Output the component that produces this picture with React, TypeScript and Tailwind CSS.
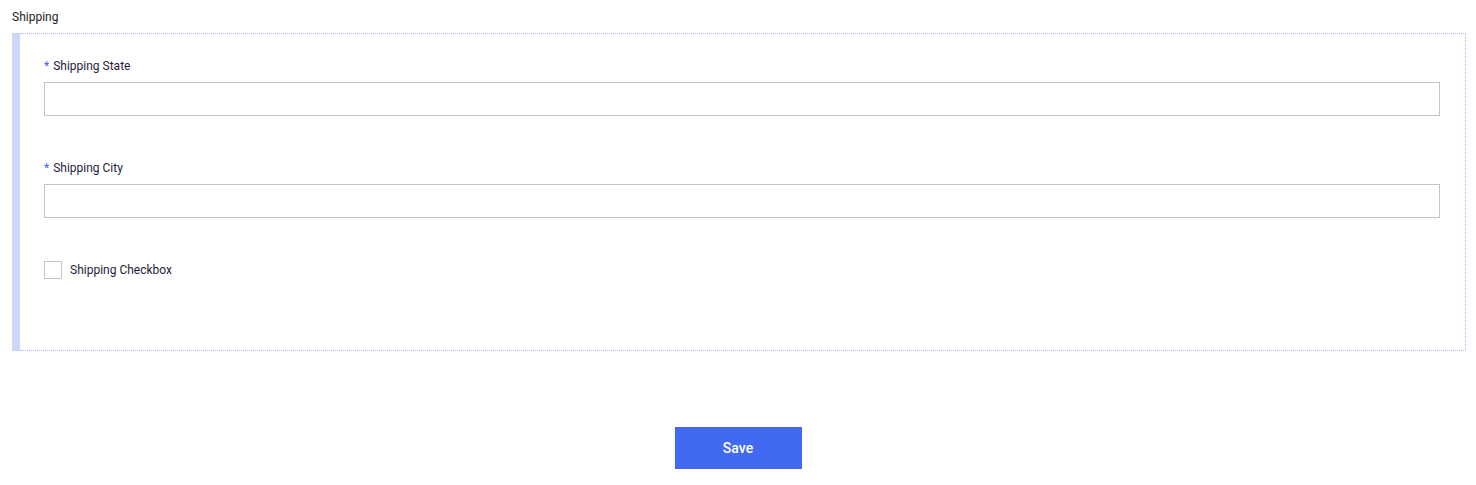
export default function App() {
  return (
    <div className="min-h-[485px] bg-white font-['Roboto','Liberation_Sans',sans-serif] text-[#1f1d3a]">
      <div className="pl-[12px] pr-[10px] pt-[9px]">
        <div className="h-[16px] text-[12px] leading-[16px] text-[#222]">Shipping</div>
        <div className="mt-[8px] flex">
          <div className="w-[8px] shrink-0 bg-[#cdd6fb]" />
          <div className="flex-1 border-t border-r border-b border-dotted border-current text-[#a3b7f7]">
            <div className="pl-[24px] pr-[25px] pt-[24px] pb-[71px] text-[#1f1d3a]">
              <Field label="Shipping State" className="mb-[44px]" />
              <Field label="Shipping City" />
              <label className="mt-[43px] flex h-[18px] items-center gap-[8px]">
                <input type="checkbox" className="h-[18px] w-[18px] appearance-none border border-[#c4c3cc] bg-white" />
                <span className="text-[12px] leading-[16px]">Shipping Checkbox</span>
              </label>
            </div>
          </div>
        </div>
      </div>
      <div className="mt-[76px] flex justify-center">
        <button className="h-[42px] w-[127px] bg-[#4269f2] text-[14px] font-medium text-white">Save</button>
      </div>
    </div>
  );
}

function Field({ label, className = "" }: { label: string; className?: string }) {
  return (
    <div className={className}>
      <div className="flex h-[16px] items-center gap-[4px] text-[12px] leading-[16px]">
        <span className="text-[#3f63f0]">*</span>
        <span>{label}</span>
      </div>
      <input className="mt-[8px] block h-[34px] w-full border border-[#c4c3cc] bg-white px-2 text-[13px] outline-none" />
    </div>
  );
}
